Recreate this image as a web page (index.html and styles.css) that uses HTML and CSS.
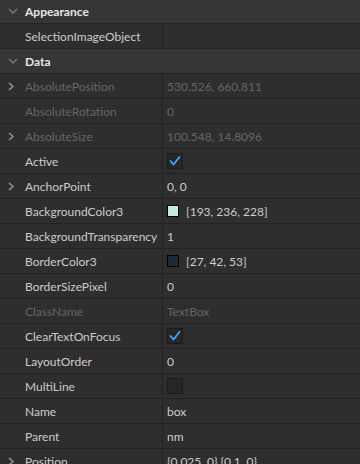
FILE: index.html
```html
<!DOCTYPE html>
<html lang="en">
<head>
    <meta charset="UTF-8">
    <meta name="viewport" content="width=device-width, initial-scale=1.0">
    <title>Properties</title>
    <link rel="stylesheet" href="styles.css">
</head>
<body>
    <div class="panel">
        <div class="section">
            <span class="caret"><svg width="10" height="6" viewBox="0 0 10 6"><polyline points="1,1 5,5 9,1" /></svg></span>
            <span class="section-title">Appearance</span>
        </div>
        <div class="row">
            <div class="name"><span class="expander"></span>SelectionImageObject</div>
            <div class="value"></div>
        </div>

        <div class="section">
            <span class="caret"><svg width="10" height="6" viewBox="0 0 10 6"><polyline points="1,1 5,5 9,1" /></svg></span>
            <span class="section-title">Data</span>
        </div>
        <div class="row disabled">
            <div class="name"><span class="expander"><svg width="6" height="9" viewBox="0 0 6 9"><polyline points="1,1 5,4.5 1,8" /></svg></span>AbsolutePosition</div>
            <div class="value">530.526, 660.811</div>
        </div>
        <div class="row disabled">
            <div class="name"><span class="expander"></span>AbsoluteRotation</div>
            <div class="value">0</div>
        </div>
        <div class="row disabled">
            <div class="name"><span class="expander"><svg width="6" height="9" viewBox="0 0 6 9"><polyline points="1,1 5,4.5 1,8" /></svg></span>AbsoluteSize</div>
            <div class="value">100.548, 14.8096</div>
        </div>
        <div class="row">
            <div class="name"><span class="expander"></span>Active</div>
            <div class="value"><span class="checkbox checked"><svg width="14" height="14" viewBox="0 0 14 14"><polyline points="2.5,7 5.5,10.5 11.5,3" /></svg></span></div>
        </div>
        <div class="row">
            <div class="name"><span class="expander"><svg width="6" height="9" viewBox="0 0 6 9"><polyline points="1,1 5,4.5 1,8" /></svg></span>AnchorPoint</div>
            <div class="value">0, 0</div>
        </div>
        <div class="row">
            <div class="name"><span class="expander"></span>BackgroundColor3</div>
            <div class="value"><span class="swatch" style="background-color: rgb(193, 236, 228);"></span>[193, 236, 228]</div>
        </div>
        <div class="row">
            <div class="name"><span class="expander"></span>BackgroundTransparency</div>
            <div class="value">1</div>
        </div>
        <div class="row">
            <div class="name"><span class="expander"></span>BorderColor3</div>
            <div class="value"><span class="swatch" style="background-color: rgb(27, 42, 53);"></span>[27, 42, 53]</div>
        </div>
        <div class="row">
            <div class="name"><span class="expander"></span>BorderSizePixel</div>
            <div class="value">0</div>
        </div>
        <div class="row disabled">
            <div class="name"><span class="expander"></span>ClassName</div>
            <div class="value">TextBox</div>
        </div>
        <div class="row">
            <div class="name"><span class="expander"></span>ClearTextOnFocus</div>
            <div class="value"><span class="checkbox checked"><svg width="14" height="14" viewBox="0 0 14 14"><polyline points="2.5,7 5.5,10.5 11.5,3" /></svg></span></div>
        </div>
        <div class="row">
            <div class="name"><span class="expander"></span>LayoutOrder</div>
            <div class="value">0</div>
        </div>
        <div class="row">
            <div class="name"><span class="expander"></span>MultiLine</div>
            <div class="value"><span class="checkbox"></span></div>
        </div>
        <div class="row">
            <div class="name"><span class="expander"></span>Name</div>
            <div class="value">box</div>
        </div>
        <div class="row">
            <div class="name"><span class="expander"></span>Parent</div>
            <div class="value">nm</div>
        </div>
        <div class="row">
            <div class="name"><span class="expander"><svg width="6" height="9" viewBox="0 0 6 9"><polyline points="1,1 5,4.5 1,8" /></svg></span>Position</div>
            <div class="value">{0.025, 0},{0.1, 0}</div>
        </div>
    </div>
</body>
</html>
```

FILE: styles.css
```css
:root {
    --row-background: #2e2e2e;
    --section-background: #353535;
    --line-color: #222222;
    --text-color: #cccccc;
    --disabled-color: #666666;
    --accent-color: #3ea6ff;
}
html, body {
    margin: 0;
    padding: 0;
    background-color: var(--row-background);
    overflow: hidden;
}
body {
    font-family: Lato, "Open Sans", sans-serif;
    font-size: 12px;
    color: var(--text-color);
}
.panel {
    width: 360px;
    margin-top: -1px;
}
.section {
    display: flex;
    align-items: center;
    height: 24px;
    background-color: var(--section-background);
    border-bottom: 1px solid var(--line-color);
}
.caret {
    width: 25px;
    display: flex;
    justify-content: center;
    padding-left: 1px;
    box-sizing: border-box;
}
.caret svg polyline {
    fill: none;
    stroke: #7a7a7a;
    stroke-width: 1.4;
}
.section-title {
    font-weight: 700;
    color: #e6e6e6;
}
.row {
    display: flex;
    height: 24px;
    border-bottom: 1px solid var(--line-color);
}
.name {
    width: 162px;
    flex-shrink: 0;
    display: flex;
    align-items: center;
    border-right: 1px solid var(--line-color);
    white-space: nowrap;
    overflow: hidden;
}
.expander {
    width: 25px;
    flex-shrink: 0;
    display: flex;
    justify-content: center;
    padding-right: 3px;
    box-sizing: border-box;
}
.expander svg polyline {
    fill: none;
    stroke: #9a9a9a;
    stroke-width: 1.4;
}
.value {
    display: flex;
    align-items: center;
    padding-left: 4px;
    white-space: nowrap;
}
.disabled .name, .disabled .value {
    color: var(--disabled-color);
}
.checkbox {
    width: 14px;
    height: 14px;
    border: 1px solid #1b1b1b;
    background-color: #262626;
    display: flex;
    align-items: center;
    justify-content: center;
}
.checkbox svg polyline {
    fill: none;
    stroke: var(--accent-color);
    stroke-width: 1.8;
    stroke-linecap: round;
    stroke-linejoin: round;
}
.swatch {
    width: 10px;
    height: 10px;
    border: 1px solid #000000;
    margin-right: 7px;
}
```
